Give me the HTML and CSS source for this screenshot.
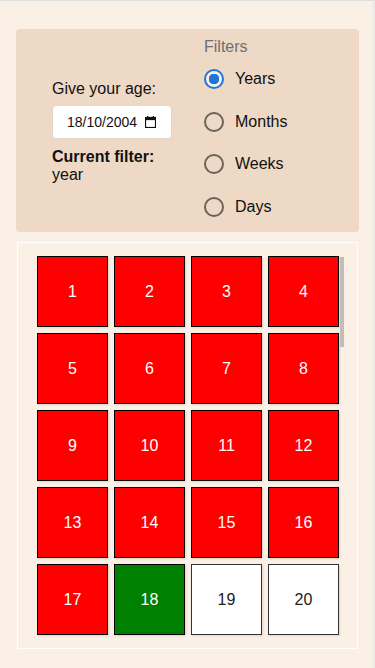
FILE: index.html
```html
<!DOCTYPE html>
<html lang="en">
<head>
<meta charset="utf-8">
<title>Life in weeks</title>
<link rel="stylesheet" href="styles.css">
</head>
<body>
<div class="page">
  <section class="panel">
    <div class="left">
      <label class="age-label" for="age">Give your age:</label>
      <div class="date-box" id="age">
        <span class="date-text">18/10/2004</span>
        <svg class="cal" width="11" height="12" viewBox="0 0 11 12" aria-hidden="true">
          <rect x="0.5" y="1.5" width="10" height="10" fill="none" stroke="#111" stroke-width="1.2"/>
          <rect x="0.5" y="1.5" width="10" height="2.6" fill="#111"/>
          <rect x="2" y="0" width="1.3" height="2" fill="#111"/>
          <rect x="7.7" y="0" width="1.3" height="2" fill="#111"/>
        </svg>
      </div>
      <div class="current"><strong>Current filter:</strong><br>year</div>
    </div>
    <div class="right">
      <div class="legend">Filters</div>
      <label class="opt"><span class="radio checked"></span><span>Years</span></label>
      <label class="opt"><span class="radio"></span><span>Months</span></label>
      <label class="opt"><span class="radio"></span><span>Weeks</span></label>
      <label class="opt"><span class="radio"></span><span>Days</span></label>
    </div>
  </section>
  <section class="grid-box">
    <div class="scroll">
      <div class="grid">
        <div class="cell past">1</div><div class="cell past">2</div><div class="cell past">3</div><div class="cell past">4</div>
        <div class="cell past">5</div><div class="cell past">6</div><div class="cell past">7</div><div class="cell past">8</div>
        <div class="cell past">9</div><div class="cell past">10</div><div class="cell past">11</div><div class="cell past">12</div>
        <div class="cell past">13</div><div class="cell past">14</div><div class="cell past">15</div><div class="cell past">16</div>
        <div class="cell past">17</div><div class="cell now">18</div><div class="cell">19</div><div class="cell">20</div>
      </div>
      <span class="thumb" aria-hidden="true"></span>
    </div>
  </section>
</div>
</body>
</html>
```
FILE: styles.css
```css
* { box-sizing: border-box; }
html, body { margin: 0; padding: 0; }
body {
  background: #faf0e6;
  font-family: "Liberation Sans", Arial, sans-serif;
  font-size: 16px;
  color: #111;
}
.page {
  height: 668px;
  overflow: hidden;
  border-top: 1px solid #dedede;
  border-right: 2px solid #e9e9e9;
  padding-top: 28px;
}
.panel {
  display: flex;
  align-items: center;
  margin: 0 14px 0 16px;
  padding: 7px 0 4px 36px;
  background: #edd9c5;
  border-radius: 4px;
  height: 203px;
}
.left {
  width: 152px;
  display: flex;
  flex-direction: column;
  align-items: flex-start;
}
.age-label { display: block; line-height: 18px; }
.date-box {
  margin-top: 7px;
  width: 120px;
  height: 34px;
  background: #fff;
  border: 1px solid #e2d6ca;
  border-radius: 4px;
  display: flex;
  align-items: center;
  padding-left: 14px;
  font-size: 14px;
  color: #111;
}
.cal { margin-left: 8px; margin-top: -1px; }
.current { margin-top: 9px; line-height: 18px; }
.current strong { font-weight: bold; }
.right {
  align-self: flex-start;
  display: flex;
  flex-direction: column;
  margin-top: 2px;
}
.legend { color: #6f6f6f; line-height: 18px; margin-bottom: 2px; }
.opt {
  display: flex;
  align-items: center;
  height: 42.6px;
  gap: 11px;
  color: #111;
}
.radio {
  width: 20px;
  height: 20px;
  border-radius: 50%;
  border: 2px solid #6b625a;
  flex: none;
}
.radio.checked {
  border-color: #1f76d6;
  background: radial-gradient(circle, #1f76d6 0 5px, #f7efe8 5.5px);
}
.grid-box {
  margin: 10px 15px 0 17px;
  border: 1px solid #fff;
  padding: 13px 12px 13px 19px;
}
.scroll {
  position: relative;
  width: 308px;
  height: 379px;
}
.thumb {
  position: absolute;
  top: 1px;
  right: 1px;
  width: 4px;
  height: 90px;
  background: #c1bcb8;
}
.grid {
  display: grid;
  grid-template-columns: repeat(4, 71px);
  grid-auto-rows: 71px;
  gap: 6px;
}
.cell {
  display: flex;
  align-items: center;
  justify-content: center;
  background: #fff;
  border: 1px solid #333;
  color: #222;
  box-shadow: 1px 1px 2px rgba(120, 80, 50, 0.18);
}
.cell.past { background: #ff0000; border-color: #000; color: #fff; }
.cell.now { background: #008000; border-color: #000; color: #fff; }
```
